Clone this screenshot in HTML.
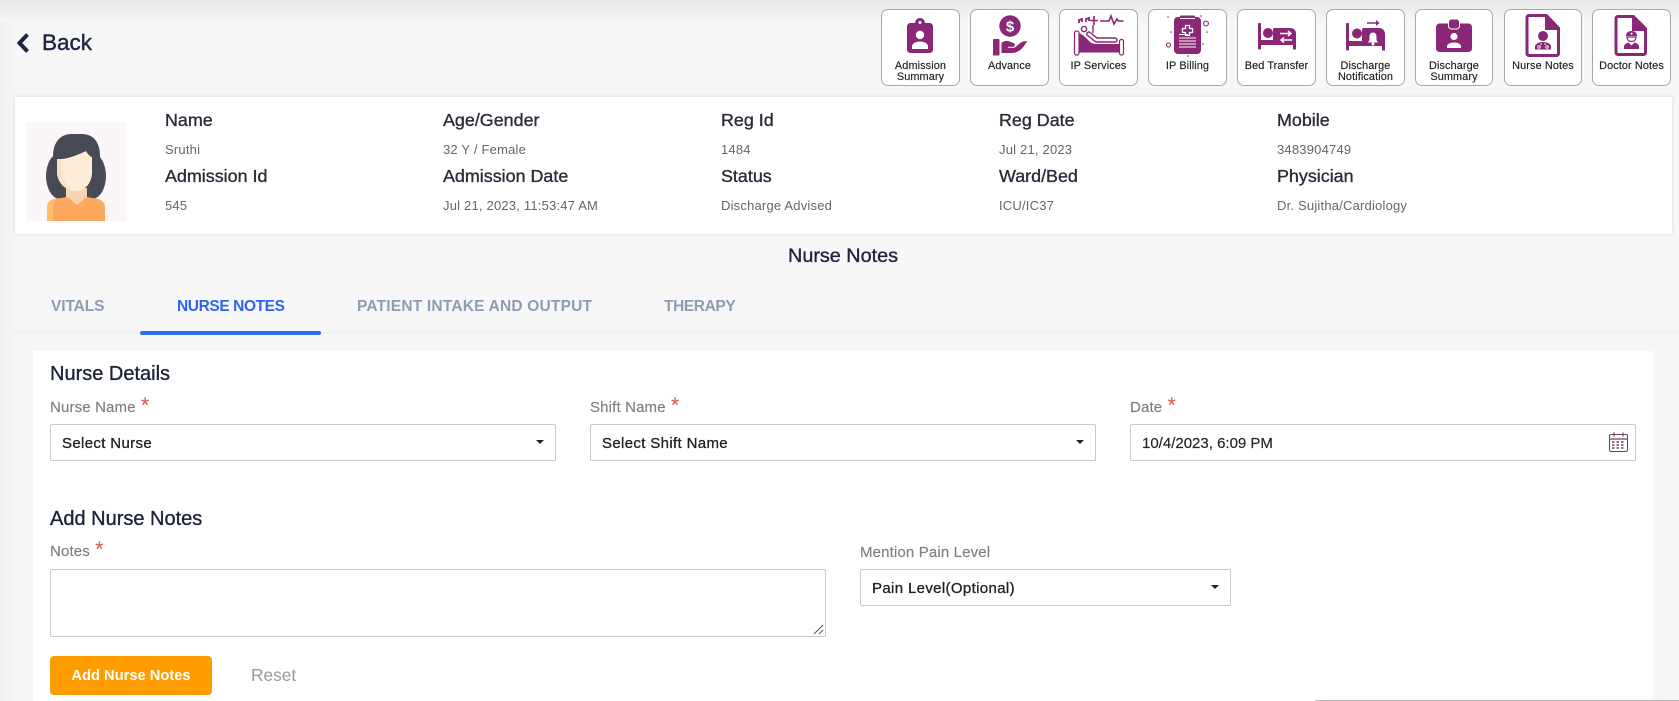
<!DOCTYPE html>
<html><head><meta charset="utf-8"><style>
html,body{margin:0;padding:0}
body{width:1679px;height:701px;overflow:hidden;position:relative;background:#f7f7f7;font-family:"Liberation Sans",sans-serif}
.t{position:absolute;white-space:nowrap;line-height:20px;height:20px}
.l{font-size:17.9px;color:#2a2a38;-webkit-text-stroke:.35px #2a2a38}
.v{font-size:13px;color:#666;letter-spacing:.2px}
.h{font-size:20px;color:#1c2238;-webkit-text-stroke:.35px #1c2238}
.f{font-size:15px;color:#7c7f84;letter-spacing:.15px;-webkit-text-stroke:.15px #7c7f84}
.f b{color:#f4574a;font-weight:400;font-size:21px;line-height:14px;position:relative;top:0;margin-left:1px}
.s{font-size:15px;color:#222;letter-spacing:.35px;-webkit-text-stroke:.3px #222}
.tab{font-size:15.5px;font-weight:700;color:#8e9cb3}
.box{position:absolute;background:#fff;border:1px solid #c9c9c9;border-radius:2px;box-sizing:border-box}
.car{position:absolute;width:0;height:0;border-left:4px solid transparent;border-right:4px solid transparent;border-top:4px solid #222}
.btn{position:absolute;top:9px;height:77px;box-sizing:border-box;background:#fff;border:1px solid #a8a8a8;border-radius:7px}
.bt{position:absolute;left:0;right:0;top:51px;text-align:center;font-size:10.9px;line-height:11px;color:#1e1e1e;letter-spacing:.1px;-webkit-text-stroke:.15px #1e1e1e}
</style></head><body>
<div style="position:absolute;left:0;top:0;width:15px;height:701px;background:linear-gradient(90deg,#f1f1f1,#f7f7f7)"></div>
<div style="position:absolute;left:0;top:0;width:1679px;height:22px;background:linear-gradient(#e6e6e6,#f7f7f7)"></div>

<svg style="position:absolute;left:0;top:0" width="40" height="70"><path d="M27.500 34.500L19.500 43L27.500 51.500" fill="none" stroke="#1f2440" stroke-width="4"/></svg>
<div class="t" style="left:42px;top:31px;height:24px;line-height:24px;font-size:22.5px;color:#1f2440;-webkit-text-stroke:.4px #1f2440">Back</div>

<div class="btn" style="left:881px;width:79px"><div class="bt">Admission<br>Summary</div></div>
<div class="btn" style="left:970px;width:79px"><div class="bt">Advance</div></div>
<div class="btn" style="left:1059px;width:79px"><div class="bt">IP Services</div></div>
<div class="btn" style="left:1148px;width:79px"><div class="bt">IP Billing</div></div>
<div class="btn" style="left:1237px;width:79px"><div class="bt">Bed Transfer</div></div>
<div class="btn" style="left:1326px;width:79px"><div class="bt">Discharge<br>Notification</div></div>
<div class="btn" style="left:1415px;width:78px"><div class="bt">Discharge<br>Summary</div></div>
<div class="btn" style="left:1504px;width:78px"><div class="bt">Nurse Notes</div></div>
<div class="btn" style="left:1592px;width:79px"><div class="bt">Doctor Notes</div></div>

<svg style="position:absolute;left:0;top:0" width="1679" height="90" fill="#8a2776">
<!-- admission summary -->
<circle cx="920" cy="23" r="5"/><rect x="907" y="23" width="26" height="30" rx="3.500"/>
<circle cx="920" cy="22.500" r="1.500" fill="#fff"/><circle cx="920" cy="35" r="4.200" fill="#fff"/>
<path d="M912 49v-2.500c0-3 3.500-5 8-5s8 2 8 5V49z" fill="#fff"/>
<!-- advance -->
<circle cx="1010" cy="26" r="10.700"/>
<text x="1010" y="31.500" text-anchor="middle" font-size="15" font-weight="700" fill="#fff" font-family="Liberation Sans">$</text>
<rect x="993" y="39" width="6.500" height="16.500" rx=".8"/>
<path d="M1001.500 43c3-2.500 5.500-2.500 8-1.500l4 1.500c2 1 2 3.800-.5 3.800h-5v1h6.500l6-5c1.600-1.300 5-1.800 6.500-1.800-1.300 3-4.500 7.500-7.500 9.500-2.500 1.700-5 2.500-8 2.500h-10z"/>
<!-- ip services -->
<g fill="none" stroke="#8a2776">
<path d="M1079 23v-3l3-1v3M1086 22v-3l3-1v3" stroke-width="1.800"/>
<path d="M1094 16v9M1090 20.500h8" stroke-width="1.600"/>
<path d="M1100 21h9l2-5 3 8 3-5 1.500 2h5" stroke-width="1.600"/>
<circle cx="1084" cy="29" r="2.600" stroke-width="1.400"/>
<path d="M1093 25v8" stroke-width="1.400"/>
</g>
<path d="M1078 33c5 1 9 6 12 9 2 1.500 4 2 7 2h24v8.500h-43z"/>
<path d="M1090 32.500L1097 38h18a2 2 0 0 1 0 4H1096L1087 35a2 2 0 0 1 3-2.500z" fill="#fff" stroke="#8a2776" stroke-width="1.400"/>
<rect x="1074.500" y="31" width="4.500" height="24" rx="2" fill="#fff" stroke="#8a2776" stroke-width="1.200"/>
<rect x="1119.500" y="39.500" width="4" height="15.500" rx="1.800" fill="#fff" stroke="#8a2776" stroke-width="1.200"/>
<!-- ip billing -->
<rect x="1174" y="17" width="27" height="37" rx="4"/>
<rect x="1180" y="15.500" width="15" height="3" rx="1"/>
<rect x="1180" y="18" width="15" height="1" fill="#fff"/>
<path d="M1185.500 25.500h4v3h3v4h-3v3h-4v-3h-3v-4h3z" fill="none" stroke="#fff" stroke-width="1.300"/>
<g fill="#fff"><rect x="1179" y="34" width="9" height="1"/><rect x="1179" y="37.500" width="17" height="1"/><rect x="1179" y="40.500" width="17" height="1"/><rect x="1179" y="43.500" width="17" height="1"/><rect x="1179" y="46.500" width="17" height="1"/></g>
<circle cx="1206" cy="23.500" r="2.400" fill="none" stroke="#8a2776" stroke-width="1.100"/>
<circle cx="1168.500" cy="45" r="2" fill="none" stroke="#8a2776" stroke-width="1.100"/>
<g><circle cx="1168" cy="17" r=".8"/><circle cx="1201" cy="16" r=".8"/><circle cx="1171" cy="32" r=".8"/><circle cx="1207" cy="32" r=".8"/><circle cx="1203" cy="44" r=".8"/><circle cx="1188" cy="56" r=".8"/></g>
<!-- bed transfer -->
<rect x="1258" y="23" width="3" height="26.500" rx="1"/>
<circle cx="1268" cy="33" r="5"/>
<path d="M1261 40h12V29.500c0-1 .5-1.500 1.500-1.500H1290c3.500 0 6 2 6 5v16.500h-3V45h-32z"/>
<g stroke="#fff" fill="none" stroke-width="1.500"><path d="M1280 33.500h11M1288 31l3 2.500-3 2.500M1292 40h-11M1284 37.500l-3 2.500 3 2.500"/></g>
<!-- discharge notification -->
<rect x="1346" y="23" width="3" height="27.500" rx="1"/>
<circle cx="1357" cy="33.500" r="5"/>
<path d="M1349 41h13V30c0-1 .5-2 2-2h15c3.500 0 6 2.500 6 6v16.500h-3V46h-33z"/>
<path d="M1367 23h11" stroke="#8a2776" stroke-width="1.500"/><path d="M1376 20l3.500 3-3.500 3z"/>
<path d="M1373 32.500c2.500 0 3.500 2 3.500 4.500v3l1.500 2.500h-10l1.500-2.500v-3c0-2.500 1-4.500 3.500-4.500z" fill="#fff"/>
<circle cx="1373" cy="44" r="1.500" fill="#fff"/>
<!-- discharge summary -->
<rect x="1436" y="23.500" width="36" height="28.500" rx="3.500"/>
<rect x="1448.500" y="19" width="11" height="10" rx="3" fill="#8a2776" stroke="#fff" stroke-width="1"/>
<circle cx="1454" cy="36.500" r="3.600" fill="#fff"/>
<path d="M1447 48v-1.500c0-2.500 3-4 7-4s7 1.500 7 4V48z" fill="#fff"/>
<!-- nurse notes -->
<path d="M1529 15.500h17l12.500 13v25a2 2 0 0 1-2 2H1529a2 2 0 0 1-2-2V17.500a2 2 0 0 1 2-2z" fill="none" stroke="#8a2776" stroke-width="3"/>
<path d="M1545 14h2l13 13.500V30h-15z"/>
<circle cx="1543" cy="36" r="5"/>
<path d="M1535 49.500v-3c0-2.500 3.500-4.500 8-4.500s8 2 8 4.500v3z"/>
<g fill="none" stroke="#fff" stroke-width=".9"><circle cx="1539" cy="47" r="1.300"/><circle cx="1547" cy="47" r="1.300"/><path d="M1541 43v2M1545 43v2"/></g>
<!-- doctor notes -->
<path d="M1618 16.500h15l12.500 12.500v23.500a2 2 0 0 1-2 2H1618a2 2 0 0 1-2-2v-34a2 2 0 0 1 2-2z" fill="none" stroke="#8a2776" stroke-width="3"/>
<path d="M1632 15h2l13 13v3h-15z"/>
<path d="M1626 36c0-3 2-5 5.500-5s5.500 2 5.500 5z"/>
<path d="M1627 37h9c0 3-2 4.500-4.500 4.500s-4.500-1.500-4.500-4.500z" fill="none" stroke="#8a2776" stroke-width="1.200"/>
<path d="M1631.500 32.500v2.500M1630.200 33.700h2.600" stroke="#fff" stroke-width=".8"/>
<path d="M1624 49v-2.500c0-2 3-3.800 4.500-4l3 3 3-3c1.500.2 4.500 2 4.500 4V49z"/>
</svg>

<!-- patient card -->
<div style="position:absolute;left:15px;top:97px;width:1657px;height:137px;background:#fff;box-shadow:0 0 4px rgba(0,0,0,.13)"></div>
<svg style="position:absolute;left:26px;top:122px" width="101" height="99" viewBox="26 122 101 99">
<rect x="26" y="122" width="101" height="99" fill="#fbf6f8"/>
<path d="M53 156c0-14 8-22 18-22h11c11 0 18 8 18 22v24H53z" fill="#474a56"/>
<ellipse cx="60" cy="176" rx="14" ry="23" fill="#474a56"/>
<ellipse cx="92" cy="176" rx="14" ry="23" fill="#474a56"/>
<path d="M66 188h21v10l-10 8-11-8z" fill="#f8d5b0"/>
<path d="M47 221v-13c0-5 3-8 7-9l13-2 10 8 10-8 11 2c4 1 7 4 7 9v13z" fill="#ffa65f"/>
<path d="M47 221v-13c0-5 3-8 7-9l3-.5c-3 3-4 6-4 10v12.500z" fill="#ffbb6e"/>
<path d="M57 159c7 1 19-3 29-8 2 3 3 5 6 6v15c0 11-7 19-16 19s-19-8-19-19z" fill="#ffecd6"/>
<path d="M57 159v13c0 10 8 18 16 19-7-4-12-14-12-32z" fill="#f8e2cb"/>
</svg>

<div class="t l" style="left:165px;top:110px">Name</div><div class="t v" style="left:165px;top:140px">Sruthi</div>
<div class="t l" style="left:165px;top:166px">Admission Id</div><div class="t v" style="left:165px;top:196px">545</div>
<div class="t l" style="left:443px;top:110px">Age/Gender</div><div class="t v" style="left:443px;top:140px">32 Y / Female</div>
<div class="t l" style="left:443px;top:166px">Admission Date</div><div class="t v" style="left:443px;top:196px">Jul 21, 2023, 11:53:47 AM</div>
<div class="t l" style="left:721px;top:110px">Reg Id</div><div class="t v" style="left:721px;top:140px">1484</div>
<div class="t l" style="left:721px;top:166px">Status</div><div class="t v" style="left:721px;top:196px">Discharge Advised</div>
<div class="t l" style="left:999px;top:110px">Reg Date</div><div class="t v" style="left:999px;top:140px">Jul 21, 2023</div>
<div class="t l" style="left:999px;top:166px">Ward/Bed</div><div class="t v" style="left:999px;top:196px">ICU/IC37</div>
<div class="t l" style="left:1277px;top:110px">Mobile</div><div class="t v" style="left:1277px;top:140px">3483904749</div>
<div class="t l" style="left:1277px;top:166px">Physician</div><div class="t v" style="left:1277px;top:196px">Dr. Sujitha/Cardiology</div>

<div class="t" style="left:0;width:1686px;text-align:center;top:246px;font-size:19.8px;color:#1c2238;-webkit-text-stroke:.35px #1c2238">Nurse Notes</div>

<!-- tabs -->
<div style="position:absolute;left:15px;top:332px;width:1664px;height:1px;background:#ebeff5"></div>
<div style="position:absolute;left:140px;top:331px;width:181px;height:4px;border-radius:2px;background:#2f6bf5"></div>
<div class="t tab" style="left:51px;top:297px;letter-spacing:-.1px">VITALS</div>
<div class="t tab" style="left:177px;top:297px;color:#2f63f0;letter-spacing:-.4px">NURSE NOTES</div>
<div class="t tab" style="left:357px;top:297px;letter-spacing:.2px">PATIENT INTAKE AND OUTPUT</div>
<div class="t tab" style="left:664px;top:297px;letter-spacing:-.4px">THERAPY</div>

<!-- panel -->
<div style="position:absolute;left:33px;top:351px;width:1620px;height:350px;background:#fff"></div>
<div class="t h" style="left:50px;top:364px">Nurse Details</div>
<div class="t f" style="left:50px;top:398px">Nurse Name <b>*</b></div>
<div class="box" style="left:50px;top:424px;width:506px;height:37px"></div>
<div class="t s" style="left:62px;top:434px">Select Nurse</div><div class="car" style="left:536px;top:440px"></div>
<div class="t f" style="left:590px;top:398px">Shift Name <b>*</b></div>
<div class="box" style="left:590px;top:424px;width:506px;height:37px"></div>
<div class="t s" style="left:602px;top:434px">Select Shift Name</div><div class="car" style="left:1076px;top:440px"></div>
<div class="t f" style="left:1130px;top:398px">Date <b>*</b></div>
<div class="box" style="left:1130px;top:424px;width:506px;height:37px"></div>
<div class="t s" style="left:1142px;top:434px;letter-spacing:0;-webkit-text-stroke:.15px #222">10/4/2023, 6:09 PM</div>
<svg style="position:absolute;left:1607px;top:431px" width="22" height="22" fill="none" stroke="#74405f" stroke-width="1">
<rect x="2.500" y="3.500" width="18" height="17" rx="1.500"/><path d="M2.500 8h18M7 1.500v4M16 1.500v4" stroke-width="1.200"/>
<path d="M5 11h13M5 14h13M5 17h13" stroke-width="1.400" stroke-dasharray="2.500 2"/></svg>

<div class="t h" style="left:50px;top:509px">Add Nurse Notes</div>
<div class="t f" style="left:50px;top:542px">Notes <b>*</b></div>
<div class="box" style="left:50px;top:569px;width:776px;height:68px"></div>
<svg style="position:absolute;left:812px;top:623px" width="13" height="13" stroke="#555" fill="none"><path d="M2 11L11 2M7 11l4-4"/></svg>
<div class="t f" style="left:860px;top:543px">Mention Pain Level</div>
<div class="box" style="left:860px;top:569px;width:371px;height:37px"></div>
<div class="t s" style="left:872px;top:579px">Pain Level(Optional)</div><div class="car" style="left:1211px;top:585px"></div>

<div style="position:absolute;left:50px;top:656px;width:162px;height:39px;background:#ff9c00;border-radius:4px"></div>
<div class="t" style="left:50px;width:162px;text-align:center;top:666px;font-size:14.7px;font-weight:700;color:#fff">Add Nurse Notes</div>
<div class="t" style="left:251px;top:665px;font-size:17.3px;color:#999">Reset</div>

<div style="position:absolute;left:1315px;top:700px;width:364px;height:1px;background:#bbb;box-shadow:0 -3px 8px rgba(0,0,0,.08)"></div>
</body></html>
